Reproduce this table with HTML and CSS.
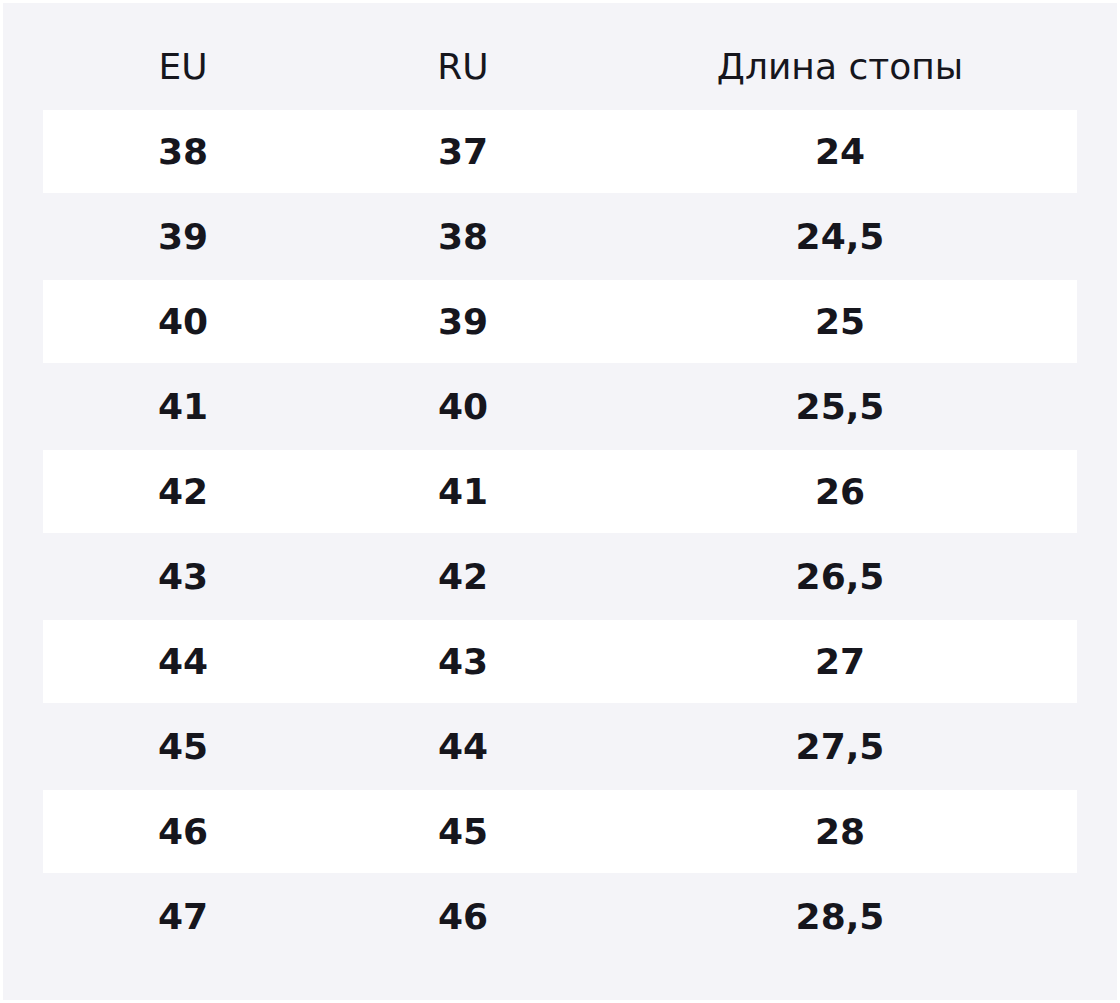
FILE: index.html
```html
<!DOCTYPE html>
<html lang="ru">
<head>
<meta charset="utf-8">
<link rel="stylesheet" href="styles.css">
</head>
<body>
<div class="panel">
  <table class="sizes">
    <thead>
      <tr><th class="c1">EU</th><th class="c2">RU</th><th class="c3">Длина стопы</th></tr>
    </thead>
    <tbody>
      <tr><td>38</td><td>37</td><td>24</td></tr>
      <tr><td>39</td><td>38</td><td>24,5</td></tr>
      <tr><td>40</td><td>39</td><td>25</td></tr>
      <tr><td>41</td><td>40</td><td>25,5</td></tr>
      <tr><td>42</td><td>41</td><td>26</td></tr>
      <tr><td>43</td><td>42</td><td>26,5</td></tr>
      <tr><td>44</td><td>43</td><td>27</td></tr>
      <tr><td>45</td><td>44</td><td>27,5</td></tr>
      <tr><td>46</td><td>45</td><td>28</td></tr>
      <tr><td>47</td><td>46</td><td>28,5</td></tr>
    </tbody>
  </table>
</div>
</body>
</html>
```
FILE: styles.css
```css
html, body {
  margin: 0;
  padding: 0;
  background: #ffffff;
}
body {
  font-family: "DejaVu Sans", sans-serif;
  color: #16161d;
}
.panel {
  margin: 3px;
  width: 1114px;
  height: 997px;
  box-sizing: border-box;
  background: #f4f4f8;
  padding: 0 40px 40px;
}
.sizes {
  width: 1034px;
  border-collapse: collapse;
  table-layout: fixed;
}
.c1, .c2 { width: 280px; }
.c3 { width: 474px; }
th {
  height: 107px;
  padding: 0;
  font-weight: normal;
  font-size: 36px;
  text-align: center;
  vertical-align: middle;
  padding-top: 20px;
  box-sizing: border-box;
}
td {
  padding: 0;
  font-weight: bold;
  font-size: 36px;
  text-align: center;
  vertical-align: middle;
}
tbody tr { height: 87px; }
tbody tr:nth-child(odd) { height: 83px; background: #ffffff; }
```
